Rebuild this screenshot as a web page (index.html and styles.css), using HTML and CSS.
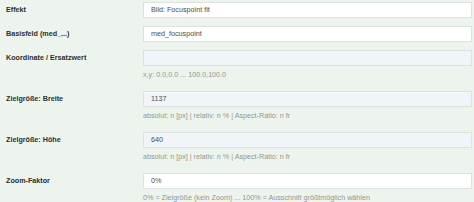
FILE: index.html
```html
<!DOCTYPE html>
<html lang="de">

<head>
    <meta charset="UTF-8">
    <meta name="viewport" content="width=device-width, initial-scale=1.0">
    <title>Effekt: Focuspoint fit</title>
    <link rel="stylesheet" href="styles.css">
</head>

<body>
    <div class="form">

        <div class="row">
            <label class="label">Effekt</label>
            <div class="field">
                <div class="input">Bild: Focuspoint fit</div>
            </div>
        </div>

        <div class="row">
            <label class="label">Basisfeld (med_...)</label>
            <div class="field">
                <div class="input">med_focuspoint</div>
            </div>
        </div>

        <div class="row">
            <label class="label">Koordinate / Ersatzwert</label>
            <div class="field">
                <div class="input blue"></div>
                <p class="help">x,y: 0.0,0.0 ... 100.0,100.0</p>
            </div>
        </div>

        <div class="row">
            <label class="label">Zielgröße: Breite</label>
            <div class="field">
                <div class="input blue">1137</div>
                <p class="help">absolut: n [px] | relativ: n % | Aspect-Ratio: n fr</p>
            </div>
        </div>

        <div class="row">
            <label class="label">Zielgröße: Höhe</label>
            <div class="field">
                <div class="input blue">640</div>
                <p class="help">absolut: n [px] | relativ: n % | Aspect-Ratio: n fr</p>
            </div>
        </div>

        <div class="row">
            <label class="label">Zoom-Faktor</label>
            <div class="field">
                <div class="input">0%</div>
                <p class="help">0% = Zielgröße (kein Zoom) ... 100% = Ausschnitt größtmöglich wählen</p>
            </div>
        </div>

    </div>
</body>

</html>
```

FILE: styles.css
```css
body {
    margin: 0;
    background-color: #edf4ee;
    font-family: "Liberation Sans", Arial, sans-serif;
    font-size: 7.2px;
    color: #333;
    overflow: hidden;
}

.form {
    padding: 2px 2px 0 6px;
}

.row {
    display: grid;
    grid-template-columns: 137px 1fr;
    margin-bottom: 8px;
}

.row:last-child {
    margin-bottom: 0;
}

.label {
    font-weight: bold;
    height: 16px;
    line-height: 16px;
    color: #2b2f2c;
}

.input {
    box-sizing: border-box;
    height: 16px;
    line-height: 14px;
    padding-left: 7px;
    border: 1px solid #dce2de;
    background-color: #fff;
    color: #4a4d4b;
}

.input.blue {
    background-color: #f1f5fa;
}

.help {
    margin: 0;
    padding: 4px 0;
    line-height: 9px;
    color: #8f9892;
}
```
